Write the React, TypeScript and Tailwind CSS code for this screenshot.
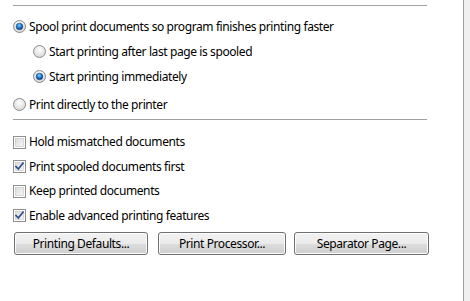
import React from "react";

function Radio({ checked }: { checked?: boolean }) {
  return (
    <svg width="13" height="13" viewBox="0 0 13 13" className="shrink-0">
      <defs>
        <radialGradient id="rbg" cx="50%" cy="35%" r="65%">
          <stop offset="0%" stopColor="#ffffff" />
          <stop offset="100%" stopColor="#d6d6d6" />
        </radialGradient>
        <radialGradient id="rdot" cx="45%" cy="35%" r="60%">
          <stop offset="0%" stopColor="#8fd3ff" />
          <stop offset="55%" stopColor="#1f7fd6" />
          <stop offset="100%" stopColor="#0b3d7a" />
        </radialGradient>
      </defs>
      <circle cx="6.5" cy="6.5" r="6" fill="url(#rbg)" stroke="#8c8c8c" strokeWidth="1" />
      {checked && <circle cx="6.5" cy="6.5" r="3.3" fill="url(#rdot)" stroke="#1c4a84" strokeWidth="0.6" />}
    </svg>
  );
}

function Check({ checked }: { checked?: boolean }) {
  return (
    <svg width="13" height="13" viewBox="0 0 13 13" className="shrink-0">
      <defs>
        <linearGradient id="cbg" x1="0" y1="0" x2="1" y2="1">
          <stop offset="0%" stopColor="#dcdcdc" />
          <stop offset="100%" stopColor="#f6f6f6" />
        </linearGradient>
      </defs>
      <rect x="0.5" y="0.5" width="12" height="12" fill="#ffffff" stroke="#8e8f8f" />
      <rect x="2.5" y="2.5" width="8" height="8" fill="url(#cbg)" stroke="#b8b8b8" strokeWidth="0.5" />
      {checked && (
        <path d="M3 6.6 L5.3 9 L10 3.2" fill="none" stroke="#2a4f8f" strokeWidth="1.7" strokeLinecap="square" />
      )}
    </svg>
  );
}

function Btn({ label, w }: { label: string; w: string }) {
  return (
    <div
      className={`${w} h-[23px] rounded-[3px] border border-[#707070] bg-[linear-gradient(#f2f2f2_0%,#ebebeb_50%,#dddddd_51%,#cfcfcf_100%)] flex items-center justify-center shadow-[inset_0_0_0_1px_#fcfcfc]`}
    >
      <span>{label}</span>
    </div>
  );
}

export default function App() {
  return (
    <div
      className="w-[470px] h-[301px] bg-white flex text-[12px] tracking-[-0.4px] text-black overflow-hidden"
      style={{ fontFamily: '"Noto Sans", "Liberation Sans", sans-serif' }}
    >
      <div className="w-[463px] flex flex-col pt-[5px]">
        <div className="ml-[13px] w-[414px] h-px bg-[#a0a0a0]" />
        <div className="mt-[8px] ml-[13px] h-[25px] flex items-center gap-[3px]">
          <Radio checked />
          <span>Spool print documents so program finishes printing faster</span>
        </div>
        <div className="ml-[33px] h-[25px] flex items-center gap-[3px]">
          <Radio />
          <span>Start printing after last page is spooled</span>
        </div>
        <div className="ml-[33px] h-[25px] flex items-center gap-[3px]">
          <Radio checked />
          <span>Start printing immediately</span>
        </div>
        <div className="mt-[3px] ml-[13px] h-[25px] flex items-center gap-[3px]">
          <Radio />
          <span>Print directly to the printer</span>
        </div>
        <div className="mt-[2px] ml-[13px] w-[414px] h-px bg-[#a0a0a0]" />
        <div className="mt-[10px] ml-[13px] h-[24.5px] flex items-center gap-[3px]">
          <Check />
          <span>Hold mismatched documents</span>
        </div>
        <div className="ml-[13px] h-[24.5px] flex items-center gap-[3px]">
          <Check checked />
          <span>Print spooled documents first</span>
        </div>
        <div className="ml-[13px] h-[24.5px] flex items-center gap-[3px]">
          <Check />
          <span>Keep printed documents</span>
        </div>
        <div className="ml-[13px] h-[24.5px] flex items-center gap-[3px]">
          <Check checked />
          <span>Enable advanced printing features</span>
        </div>
        <div className="mt-[4px] ml-[14px] flex">
          <Btn label="Printing Defaults..." w="w-[134px]" />
          <div className="ml-[10px]">
            <Btn label="Print Processor..." w="w-[128px]" />
          </div>
          <div className="ml-[8px]">
            <Btn label="Separator Page..." w="w-[135px]" />
          </div>
        </div>
      </div>
      <div className="w-px h-full bg-[#a0a0a0]" />
      <div className="flex-1 h-full bg-[#f0f0f0]" />
    </div>
  );
}
